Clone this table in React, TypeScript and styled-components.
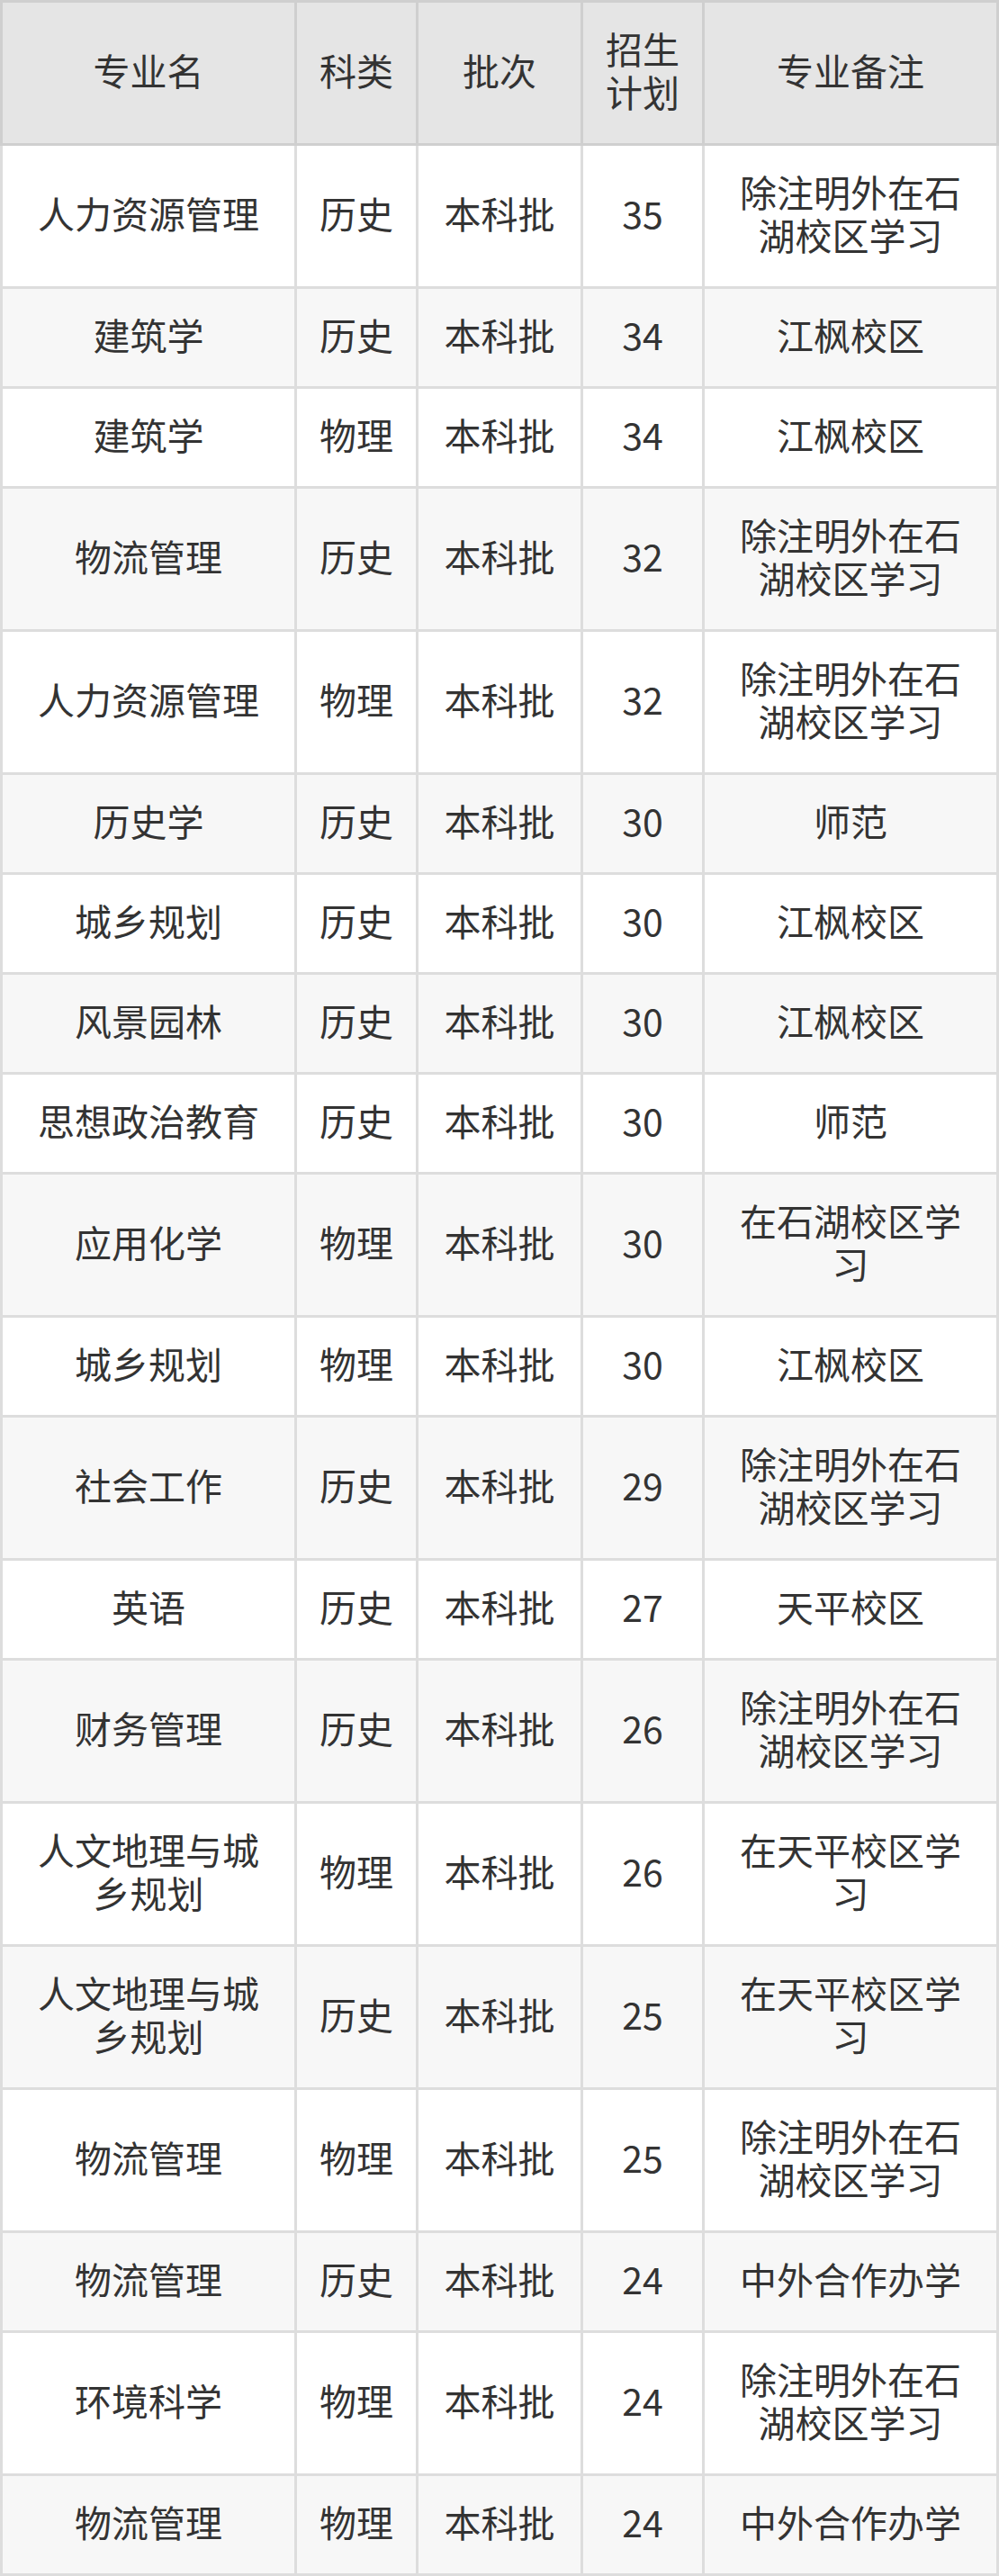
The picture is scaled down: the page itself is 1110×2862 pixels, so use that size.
import React from "react";
import styled, { createGlobalStyle, css } from "styled-components";

const GlobalStyle = createGlobalStyle`
  html, body {
    margin: 0;
    padding: 0;
    background: #ffffff;
  }
  body {
    font-family: "Noto Sans CJK SC", "Noto Sans", sans-serif;
    color: #333333;
  }
`;

type Row = [string, string, string, string, string];

const headers: Row = ["专业名", "科类", "批次", "招生计划", "专业备注"];

const rows: Row[] = [
  ["人力资源管理", "历史", "本科批", "35", "除注明外在石湖校区学习"],
  ["建筑学", "历史", "本科批", "34", "江枫校区"],
  ["建筑学", "物理", "本科批", "34", "江枫校区"],
  ["物流管理", "历史", "本科批", "32", "除注明外在石湖校区学习"],
  ["人力资源管理", "物理", "本科批", "32", "除注明外在石湖校区学习"],
  ["历史学", "历史", "本科批", "30", "师范"],
  ["城乡规划", "历史", "本科批", "30", "江枫校区"],
  ["风景园林", "历史", "本科批", "30", "江枫校区"],
  ["思想政治教育", "历史", "本科批", "30", "师范"],
  ["应用化学", "物理", "本科批", "30", "在石湖校区学习"],
  ["城乡规划", "物理", "本科批", "30", "江枫校区"],
  ["社会工作", "历史", "本科批", "29", "除注明外在石湖校区学习"],
  ["英语", "历史", "本科批", "27", "天平校区"],
  ["财务管理", "历史", "本科批", "26", "除注明外在石湖校区学习"],
  ["人文地理与城乡规划", "物理", "本科批", "26", "在天平校区学习"],
  ["人文地理与城乡规划", "历史", "本科批", "25", "在天平校区学习"],
  ["物流管理", "物理", "本科批", "25", "除注明外在石湖校区学习"],
  ["物流管理", "历史", "本科批", "24", "中外合作办学"],
  ["环境科学", "物理", "本科批", "24", "除注明外在石湖校区学习"],
  ["物流管理", "物理", "本科批", "24", "中外合作办学"],
];

const Table = styled.div`
  width: 1110px;
  display: flex;
  flex-direction: column;
`;

const RowGrid = styled.div<{ $header?: boolean; $striped?: boolean }>`
  display: grid;
  grid-template-columns: 330px 135px 183px 135px 327px;
  background: ${(p) => (p.$header ? "#e5e5e5" : p.$striped ? "#f7f7f7" : "#ffffff")};
`;

const Cell = styled.div<{ $header?: boolean; $first?: boolean }>`
  box-sizing: border-box;
  display: flex;
  align-items: center;
  justify-content: center;
  text-align: center;
  padding: 26px 22px 34px;
  font-size: 41px;
  line-height: 48px;
  font-weight: 400;
  color: #333333;
  word-break: break-all;
  border-right: 3px solid ${(p) => (p.$header ? "#cfcfcf" : "#dddddd")};
  border-bottom: 3px solid ${(p) => (p.$header ? "#cfcfcf" : "#dddddd")};
  ${(p) =>
    p.$first &&
    css`
      border-left: 3px solid ${p.$header ? "#cfcfcf" : "#dddddd"};
    `}
  ${(p) =>
    p.$header &&
    css`
      border-top: 3px solid #cfcfcf;
    `}
`;

export default function App() {
  return (
    <>
      <GlobalStyle />
      <Table role="table">
        <RowGrid $header role="row">
          {headers.map((h, i) => (
            <Cell key={h} $header $first={i === 0} role="columnheader">
              {h}
            </Cell>
          ))}
        </RowGrid>
        {rows.map((r, ri) => (
          <RowGrid key={ri} $striped={ri % 2 === 1} role="row">
            {r.map((c, ci) => (
              <Cell key={ci} $first={ci === 0} role="cell">
                {c}
              </Cell>
            ))}
          </RowGrid>
        ))}
      </Table>
    </>
  );
}
